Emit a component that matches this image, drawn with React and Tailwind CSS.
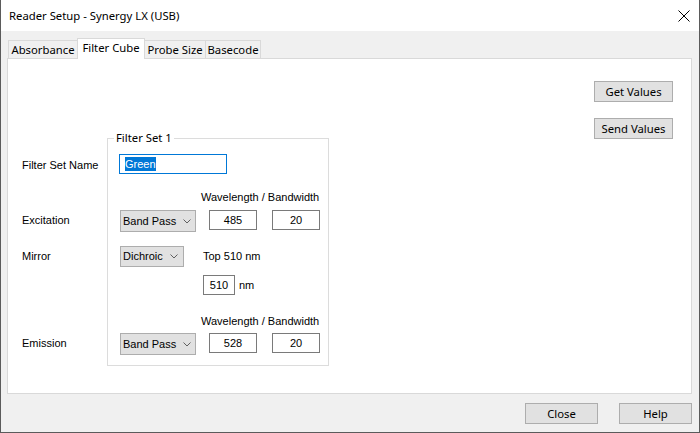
import React from "react";

function Chevron() {
  return (
    <svg width="8" height="5" viewBox="0 0 8 5" className="shrink-0">
      <path d="M0.5 0.5 L4 4 L7.5 0.5" fill="none" stroke="#606060" strokeWidth="1" />
    </svg>
  );
}

function Select({ label, w }) {
  return (
    <div className={`${w} h-[22px] ml-[1px] bg-[#e1e1e1] border border-[#adadad] flex items-center justify-between pl-[2px] pr-[4px]`}>
      <span className="leading-[13px]">{label}</span>
      <Chevron />
    </div>
  );
}

function NumBox({ value, w = "w-[48px]", cls = "" }) {
  return (
    <div className={`${w} h-[20px] border border-[#7a7a7a] bg-white flex items-center justify-center ${cls}`}>
      <span className="leading-[13px]">{value}</span>
    </div>
  );
}

function Btn({ children, w }) {
  return (
    <div className={`${w} h-[21px] bg-[#e1e1e1] border border-[#adadad] flex items-center justify-center [font-family:Noto_Sans,sans-serif] text-[11.3px] leading-[14px]`}>
      {children}
    </div>
  );
}

export default function App() {
  return (
    <div className="w-[700px] h-[433px] bg-[#f0f0f0] border-x border-b border-[#5b5b5b] flex flex-col [font-family:Liberation_Sans,sans-serif] text-[11px] text-black overflow-hidden">
      {/* Title bar */}
      <div className="h-[31px] shrink-0 bg-white flex items-center justify-between pl-[8px] pr-[9px]">
        <span className="[font-family:Noto_Sans,sans-serif] text-[11.3px] leading-[16px]">Reader Setup - Synergy LX (USB)</span>
        <svg width="12" height="12" viewBox="0 0 12 12">
          <path d="M0.5 0.5 L11.5 11.5 M11.5 0.5 L0.5 11.5" stroke="#000" strokeWidth="1" fill="none" />
        </svg>
      </div>

      {/* Tabs */}
      <div className="mt-[7px] h-[20px] pl-[7px] flex items-end shrink-0 relative z-10 [font-family:Noto_Sans,sans-serif] text-[11.3px]">
        <div className="w-[69px] h-[18px] border-l border-t border-[#d9d9d9] bg-[#f0f0f0] flex items-center justify-center leading-[14px]">Absorbance</div>
        <div className="w-[68px] h-[21px] -mb-[1px] border-x border-t border-[#d9d9d9] bg-white flex items-center justify-center leading-[14px] pb-[2px]">Filter Cube</div>
        <div className="w-[60px] h-[18px] border-t border-[#d9d9d9] bg-[#f0f0f0] flex items-center justify-center leading-[14px]">Probe Size</div>
        <div className="w-[56px] h-[18px] border-x border-t border-[#d9d9d9] bg-[#f0f0f0] flex items-center justify-center leading-[14px]">Basecode</div>
      </div>

      {/* Panel */}
      <div className="ml-[6px] mr-[7px] h-[336px] shrink-0 bg-white border border-[#d9d9d9] flex">
        <div className="pt-[79px] pl-[14px] flex items-start">
          <div className="w-[85px] flex flex-col leading-[13px]">
            <span className="mt-[21px]">Filter Set Name</span>
            <span className="mt-[42px]">Excitation</span>
            <span className="mt-[23px]">Mirror</span>
            <span className="mt-[74px]">Emission</span>
          </div>

          <div className="w-[222px] border border-[#dcdcdc] relative pl-[11px] pb-[10px] flex flex-col">
            <span className="absolute -top-[8px] left-[6px] bg-white px-[2px] leading-[14px] [font-family:Noto_Sans,sans-serif] text-[11.3px]">Filter Set 1</span>

            <div className="mt-[15px] w-[108px] h-[20px] border border-[#0078d7] flex items-center pl-[5px]">
              <span className="bg-[#0078d7] text-white leading-[14px]">Green</span>
            </div>

            <span className="mt-[17px] ml-[82px] leading-[13px]">Wavelength / Bandwidth</span>

            <div className="mt-[6px] flex items-start">
              <Select label="Band Pass" w="w-[76px]" />
              <NumBox value="485" cls="ml-[13px]" />
              <NumBox value="20" cls="ml-[15px]" />
            </div>

            <div className="mt-[14px] flex items-center">
              <div className="w-[64px] h-[21px] ml-[1px] bg-[#e1e1e1] border border-[#adadad] flex items-center justify-between pl-[2px] pr-[5px]">
                <span className="leading-[13px]">Dichroic</span>
                <Chevron />
              </div>
              <span className="ml-[19px] leading-[13px]">Top 510 nm</span>
            </div>

            <div className="mt-[8px] ml-[84px] flex items-center">
              <NumBox value="510" w="w-[32px]" />
              <span className="ml-[4px] leading-[13px]">nm</span>
            </div>

            <span className="mt-[20px] ml-[82px] leading-[13px]">Wavelength / Bandwidth</span>

            <div className="mt-[5px] flex items-start">
              <Select label="Band Pass" w="w-[76px]" />
              <NumBox value="528" cls="ml-[13px]" />
              <NumBox value="20" cls="ml-[15px]" />
            </div>
          </div>
        </div>

        <div className="ml-auto pt-[22px] pr-[18px] flex flex-col gap-[16px]">
          <Btn w="w-[79px]">Get Values</Btn>
          <Btn w="w-[79px]">Send Values</Btn>
        </div>
      </div>

      {/* Bottom buttons */}
      <div className="mt-[9px] mr-[7px] flex justify-end gap-[21px]">
        <Btn w="w-[73px]">Close</Btn>
        <Btn w="w-[73px]">Help</Btn>
      </div>
    </div>
  );
}
